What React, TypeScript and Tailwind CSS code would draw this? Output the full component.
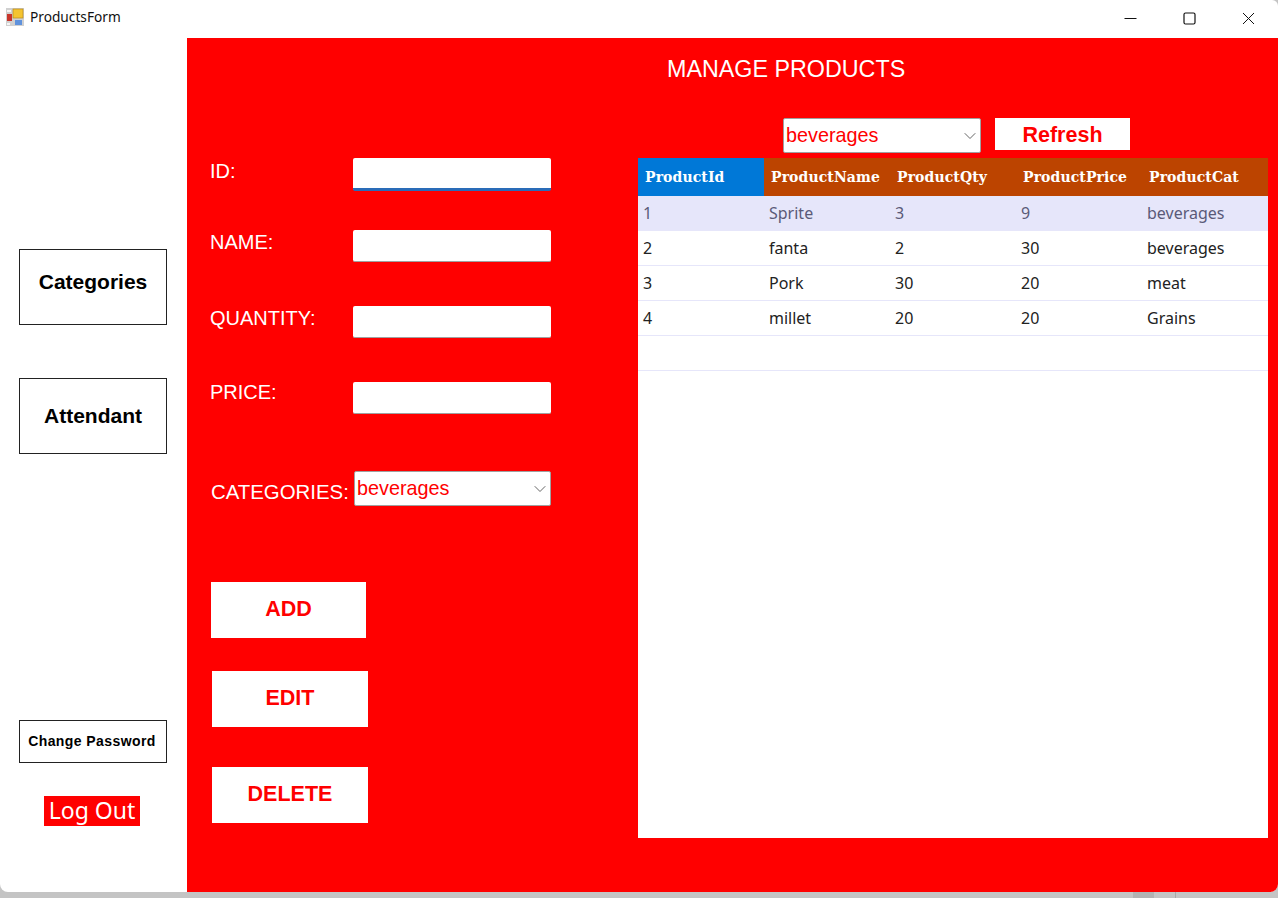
import { ChevronDown } from "lucide-react"

const columns = ["ProductId", "ProductName", "ProductQty", "ProductPrice", "ProductCat"]

const products = [
    ["1", "Sprite", "3", "9", "beverages"],
    ["2", "fanta", "2", "30", "beverages"],
    ["3", "Pork", "30", "20", "meat"],
    ["4", "millet", "20", "20", "Grains"],
    ["", "", "", "", ""],
]

function AppIcon() {
    return (
        <svg width="18" height="18" viewBox="0 0 18 18">
            <rect x="0" y="0" width="18" height="18" fill="#d0d0d0" />
            <rect x="7" y="1" width="10" height="9" fill="#f4c430" stroke="#b98a1c" strokeWidth="0.7" />
            <rect x="1" y="6" width="5" height="7" fill="#c8352b" />
            <rect x="9" y="12" width="7" height="5" fill="#5f92dc" />
            <rect x="1" y="15" width="3" height="2" fill="#f5f5f5" />
            <rect x="1" y="2" width="4" height="2" fill="#f5f5f5" />
        </svg>
    )
}

function ComboBox({ width }: { width: string }) {
    return (
        <div className={`${width} h-[35px] flex items-center justify-between bg-white border border-[#a0a0a0] rounded-[2px] pl-[2px] text-[19.8px] text-[#ff0000]`}>
            <span>beverages</span>
            <ChevronDown size={20} strokeWidth={1.2} className="text-[#666666]" />
        </div>
    )
}

function Field({ label, labelClass, inputClass }: { label: string; labelClass?: string; inputClass?: string }) {
    return (
        <div className="flex items-start">
            <label className={`w-[143px] text-[20px] leading-[24px] text-white ${labelClass ?? ""}`}>{label}</label>
            <input className={`w-[198px] bg-white rounded-[2px] outline-none ${inputClass ?? "h-[32px] border-b border-[#a0a0a0]"}`} />
        </div>
    )
}

function ActionButton({ label, className }: { label: string; className: string }) {
    return (
        <button className={`h-[56px] bg-white text-[#ff0000] text-[21.5px] leading-[24px] font-bold pb-[2px] ${className}`}>
            {label}
        </button>
    )
}

function SideButton({ label, className }: { label: string; className: string }) {
    return (
        <button className={`w-[148px] border border-[#222222] bg-white font-bold text-black ${className}`}>
            {label}
        </button>
    )
}

export default function App() {
    return (
        <div className="w-[1278px] h-[898px] bg-[#c4c4c4] overflow-hidden font-['Liberation_Sans',sans-serif]">
            <div className="h-[892px] flex flex-col bg-white rounded-b-[8px] rounded-tr-[6px] overflow-hidden">
                {/* title bar */}
                <div className="h-[38px] flex items-center shrink-0">
                    <div className="ml-[6px] mt-[-4px]">
                        <AppIcon />
                    </div>
                    <span className="ml-[6px] mt-[-4px] text-[13.7px] text-[#111111] font-['Noto_Sans',sans-serif]">ProductsForm</span>
                    <div className="ml-auto flex items-center mt-[-1px] pr-[23px] gap-[46px]">
                        <svg width="13" height="13" viewBox="0 0 13 13">
                            <path d="M0.5 6.5H12.5" stroke="#111111" strokeWidth="1" />
                        </svg>
                        <svg width="13" height="13" viewBox="0 0 13 13">
                            <rect x="1" y="1" width="11" height="11" rx="1.5" fill="none" stroke="#111111" strokeWidth="1.2" />
                        </svg>
                        <svg width="13" height="13" viewBox="0 0 13 13">
                            <path d="M1 1L12 12M12 1L1 12" stroke="#111111" strokeWidth="1" />
                        </svg>
                    </div>
                </div>

                <div className="flex flex-1 min-h-0">
                    {/* sidebar */}
                    <div className="w-[187px] shrink-0 flex flex-col pl-[19px] pt-[211px]">
                        <SideButton label="Categories" className="h-[76px] text-[21px] pb-[10px]" />
                        <SideButton label="Attendant" className="h-[76px] mt-[53px] text-[21px]" />
                        <SideButton label="Change Password" className="h-[43px] mt-[266px] pr-[2px] text-[14px] tracking-[0.42px]" />
                        <span className="self-start ml-[25px] mt-[33px] w-[96px] h-[30px] bg-[#ff0000] text-white text-center text-[23px] leading-[29px] font-['Noto_Sans',sans-serif]">
                            Log Out
                        </span>
                    </div>

                    {/* main panel */}
                    <div className="flex-1 bg-[#ff0000] flex">
                        <div className="w-[451px] shrink-0 pl-[23px] pt-[120px] flex flex-col">
                            <Field label="ID:" labelClass="pt-[1px]" inputClass="h-[33px] border-b-[3px] border-[#2a6cb8]" />
                            <div className="mt-[39px]">
                                <Field label="NAME:" />
                            </div>
                            <div className="mt-[44px]">
                                <Field label="QUANTITY:" />
                            </div>
                            <div className="mt-[44px]">
                                <Field label="PRICE:" labelClass="mt-[-2px]" />
                            </div>
                            <div className="mt-[57px] flex items-start">
                                <label className="ml-[1px] w-[143px] pt-[9px] text-[20.4px] leading-[24px] text-white whitespace-nowrap">CATEGORIES:</label>
                                <ComboBox width="w-[197px]" />
                            </div>
                            <div className="mt-[76px] flex flex-col items-start">
                                <ActionButton label="ADD" className="ml-[1px] w-[155px]" />
                                <ActionButton label="EDIT" className="ml-[2px] mt-[33px] w-[156px]" />
                                <ActionButton label="DELETE" className="ml-[2px] mt-[40px] w-[156px]" />
                            </div>
                        </div>

                        <div className="flex-1 flex flex-col">
                            <h1 className="mt-[16px] ml-[29px] text-[23.3px] leading-[30px] text-white">MANAGE PRODUCTS</h1>
                            <div className="mt-[34px] flex items-start">
                                <div className="ml-[145px]">
                                    <ComboBox width="w-[198px]" />
                                </div>
                                <button className="ml-[14px] w-[135px] h-[32px] bg-white text-[#ff0000] text-[21.5px] font-bold pt-[1px]">Refresh</button>
                            </div>
                            {/* products grid */}
                            <div className="mt-[5px] w-[630px] h-[680px] bg-white">
                                <div className="flex h-[38px]">
                                    {columns.map((col, i) => (
                                        <div
                                            key={col}
                                            className={`w-[126px] flex items-center pl-[7px] text-white text-[14px] font-bold font-['DejaVu_Serif',serif] tracking-[0.1px] ${i === 0 ? "bg-[#0078d7]" : "bg-[#bc4400]"}`}
                                        >
                                            {col}
                                        </div>
                                    ))}
                                </div>
                                {products.map((row, r) => (
                                    <div
                                        key={r}
                                        className={`flex h-[35px] border-b border-[#e6e6fa] text-[16px] font-['Noto_Sans',sans-serif] ${r === 0 ? "bg-[#e6e6fa] text-[#5a5a78]" : "text-[#222222]"}`}
                                    >
                                        {row.map((cell, c) => (
                                            <div key={c} className="w-[126px] flex items-center pl-[5px]">
                                                {cell}
                                            </div>
                                        ))}
                                    </div>
                                ))}
                            </div>
                        </div>
                    </div>
                </div>
            </div>
            {/* what shows of the window behind */}
            <div className="h-[6px] flex">
                <div className="ml-[1133px] w-[21px] bg-[#b2b2b2]" />
                <div className="ml-[21px] w-[1px] bg-[#a8a8a8]" />
            </div>
        </div>
    )
}
